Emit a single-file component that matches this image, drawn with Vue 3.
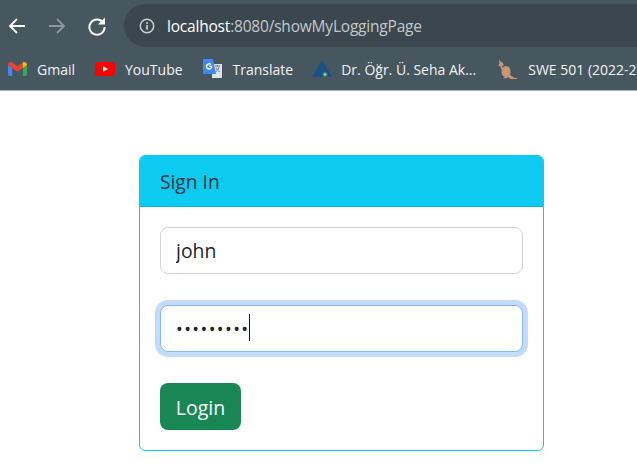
<script setup>
const bookmarks = [
  { name: 'Gmail', icon: 'gmail' },
  { name: 'YouTube', icon: 'youtube' },
  { name: 'Translate', icon: 'translate' },
  { name: 'Dr. Öğr. Ü. Seha Ak...', icon: 'tri' },
  { name: 'SWE 501 (2022-2023)', icon: 'roo' },
]
</script>

<template>
  <div class="page">
    <header class="chrome">
      <div class="toolbar">
        <svg class="nav" width="20" height="20" viewBox="0 0 20 20" fill="none" stroke="#fff" stroke-width="1.8">
          <path d="M18 10H3M10 3l-7 7 7 7" />
        </svg>
        <svg class="nav" width="20" height="20" viewBox="0 0 20 20" fill="none" stroke="#8b979c" stroke-width="1.8">
          <path d="M2 10h15M10 3l7 7-7 7" />
        </svg>
        <svg class="nav" width="20" height="20" viewBox="0 0 20 20" fill="none" stroke="#fff" stroke-width="1.9">
          <path d="M16 6.500A7.600 7.600 0 1 0 17.600 11" />
          <path d="M18 1.500v7h-7z" fill="#fff" stroke="none" />
        </svg>
        <div class="address">
          <svg width="16" height="16" viewBox="0 0 16 16" fill="none">
            <circle cx="8" cy="8" r="6.700" stroke="#c9cfd2" stroke-width="1.500" />
            <rect x="7.200" y="7" width="1.700" height="4.600" fill="#c9cfd2" />
            <rect x="7.200" y="4.200" width="1.700" height="1.700" fill="#c9cfd2" />
          </svg>
          <span class="url"><span class="host">localhost</span>:8080/showMyLoggingPage</span>
        </div>
      </div>
      <nav class="bookmarks">
        <div v-for="b in bookmarks" :key="b.name" class="bookmark">
          <svg v-if="b.icon === 'gmail'" width="19" height="14" viewBox="0 0 18 14" preserveAspectRatio="none">
            <path d="M0 3v9.600C0 13.400.6 14 1.400 14H4V6z" fill="#4285f4" />
            <path d="M14 6v8h2.600c.8 0 1.400-.6 1.400-1.400V3z" fill="#34a853" />
            <path d="M0 3c0-2.600 2.600-3.600 4-2.400L9 4.400v5.400L0 3z" fill="#ea4335" />
            <path d="M4 .6 9 4.400l5-3.800v5.400L9 9.800 4 6z" fill="#ea4335" />
            <path d="M14 .6C15.400-.6 18 .4 18 3l-4 3z" fill="#fbbc04" />
          </svg>
          <svg v-else-if="b.icon === 'youtube'" width="20" height="14" viewBox="0 0 20 14">
            <rect width="20" height="14" rx="3.500" fill="#f00" />
            <path d="M8 4.200 13 7l-5 2.800z" fill="#fff" />
          </svg>
          <svg v-else-if="b.icon === 'translate'" width="20" height="20" viewBox="0 0 20 20">
            <path d="M9 5h10v13a1 1 0 0 1-1 1H9z" fill="#dfe3e6" />
            <path d="M12 7h5M14.500 6v1.500M16 8c-.5 2.500-2 4-3.800 5M13 8.500c.7 2 2 3.500 3.800 4.300" stroke="#6e7b82" stroke-width="1" fill="none" />
            <path d="M1 0h9l3 15H1a1 1 0 0 1-1-1V1a1 1 0 0 1 1-1z" fill="#4285f4" />
            <path d="M9.100 6.800H6.200v1.300h1.600c-.2.800-.8 1.200-1.600 1.200a1.900 1.900 0 0 1 0-3.800c.5 0 .9.200 1.200.5l1-.9a3.300 3.300 0 1 0-2.200 5.600c1.900 0 3-1.300 3-3.200z" fill="#fff" />
          </svg>
          <svg v-else-if="b.icon === 'tri'" class="tri" width="20" height="18" viewBox="0 0 20 18">
            <path d="M10 0 20 17H0z" fill="#1c4f86" />
            <circle cx="13" cy="14.500" r="2.500" fill="#3f8c6b" />
            <circle cx="13" cy="14.500" r="1" fill="#e6e2a8" />
          </svg>
          <svg v-else width="22" height="22" viewBox="0 0 22 22" fill="#c99679">
            <path d="M3 1.500 5 4l1.600.4 1 2c.2 1-.6 1.600-1.600 1.400l1 3c2-1.600 5-1 6.500 1 1 1.500 1 3.500.5 5L18 19.800l3 .4v.8h-6.500l-2-2-2 1.200H7.600v-.8l2-.8-.8-3.600-2.800-3-2-4-1.600-.6 1-1.800z" />
            <ellipse cx="10" cy="13.500" rx="4.500" ry="5.500" />
          </svg>
          <span>{{ b.name }}</span>
        </div>
      </nav>
    </header>

    <main class="content">
      <section class="card">
        <div class="card-header">Sign In</div>
        <form class="card-body" @submit.prevent>
          <input class="field" type="text" value="john" />
          <div class="focused-wrap">
            <input class="field focused" type="password" value="123456789" />
            <span class="caret"></span>
          </div>
          <button class="btn-login" type="submit">Login</button>
        </form>
      </section>
    </main>
  </div>
</template>

<style>
html, body {
  margin: 0;
  background: #fff;
  overflow: hidden;
}
</style>

<style scoped>
.page {
  width: 637px;
  height: 471px;
  overflow: hidden;
  font-family: "Open Sans", "Noto Sans", sans-serif;
}

.chrome {
  background: #47575f;
  height: 91px;
  border-bottom: 1px solid #a9b2b6;
  box-sizing: border-box;
  overflow: hidden;
}

.toolbar {
  display: flex;
  align-items: center;
  height: 47px;
  padding: 4px 0 0 7px;
  box-sizing: border-box;
}

.nav {
  flex: none;
  margin-right: 20px;
}

.address {
  flex: none;
  display: flex;
  align-items: center;
  gap: 12px;
  width: 560px;
  height: 43px;
  margin-left: -3px;
  padding-left: 15px;
  background: #3b474e;
  border-radius: 22px 0 0 22px;
  box-sizing: border-box;
}

.url {
  color: #c2c9cc;
  font-size: 15.5px;
  letter-spacing: -0.2px;
  white-space: nowrap;
}

.host {
  color: #fff;
}

.bookmarks {
  display: flex;
  align-items: center;
  gap: 20px;
  height: 44px;
  padding-left: 8px;
  white-space: nowrap;
}

.bookmark {
  flex: none;
  display: flex;
  align-items: center;
  gap: 10px;
  color: #f1f3f4;
  font-size: 14px;
}

.tri {
  margin-left: -1px;
  margin-right: -1px;
}

.content {
  padding: 64px 0 0 139px;
}

.card {
  width: 405px;
  height: 296px;
  border: 1px solid #0dcaf0;
  border-radius: 6px;
  box-sizing: border-box;
  overflow: hidden;
}

.card-header {
  height: 50px;
  padding-left: 20px;
  line-height: 52px;
  background: #0dcaf0;
  border-bottom: 1px solid #0bb5d8;
  color: #25343f;
  font-size: 19.2px;
}

.card-body {
  display: flex;
  flex-direction: column;
  align-items: flex-start;
  padding: 20px 20px 0;
}

.field {
  display: block;
  width: 363px;
  height: 47px;
  padding: 0 15px;
  border: 1px solid #ced4da;
  border-radius: 8px;
  box-sizing: border-box;
  background: #fff;
  color: #212529;
  font-family: inherit;
  font-size: 19.4px;
  outline: none;
}

.focused-wrap {
  position: relative;
  margin-top: 31px;
}

.focused {
  border-color: #86b7fe;
  box-shadow: 0 0 0 5px #c2dbfe;
  font-size: 18px;
  letter-spacing: 1.4px;
}

.caret {
  position: absolute;
  left: 89px;
  top: 9px;
  width: 1px;
  height: 27px;
  background: #111;
}

.btn-login {
  width: 81px;
  height: 47px;
  margin-top: 31px;
  padding: 2px 0 0;
  border: none;
  border-radius: 8px;
  background: #198754;
  color: #fff;
  font-family: inherit;
  font-size: 19.5px;
}
</style>
